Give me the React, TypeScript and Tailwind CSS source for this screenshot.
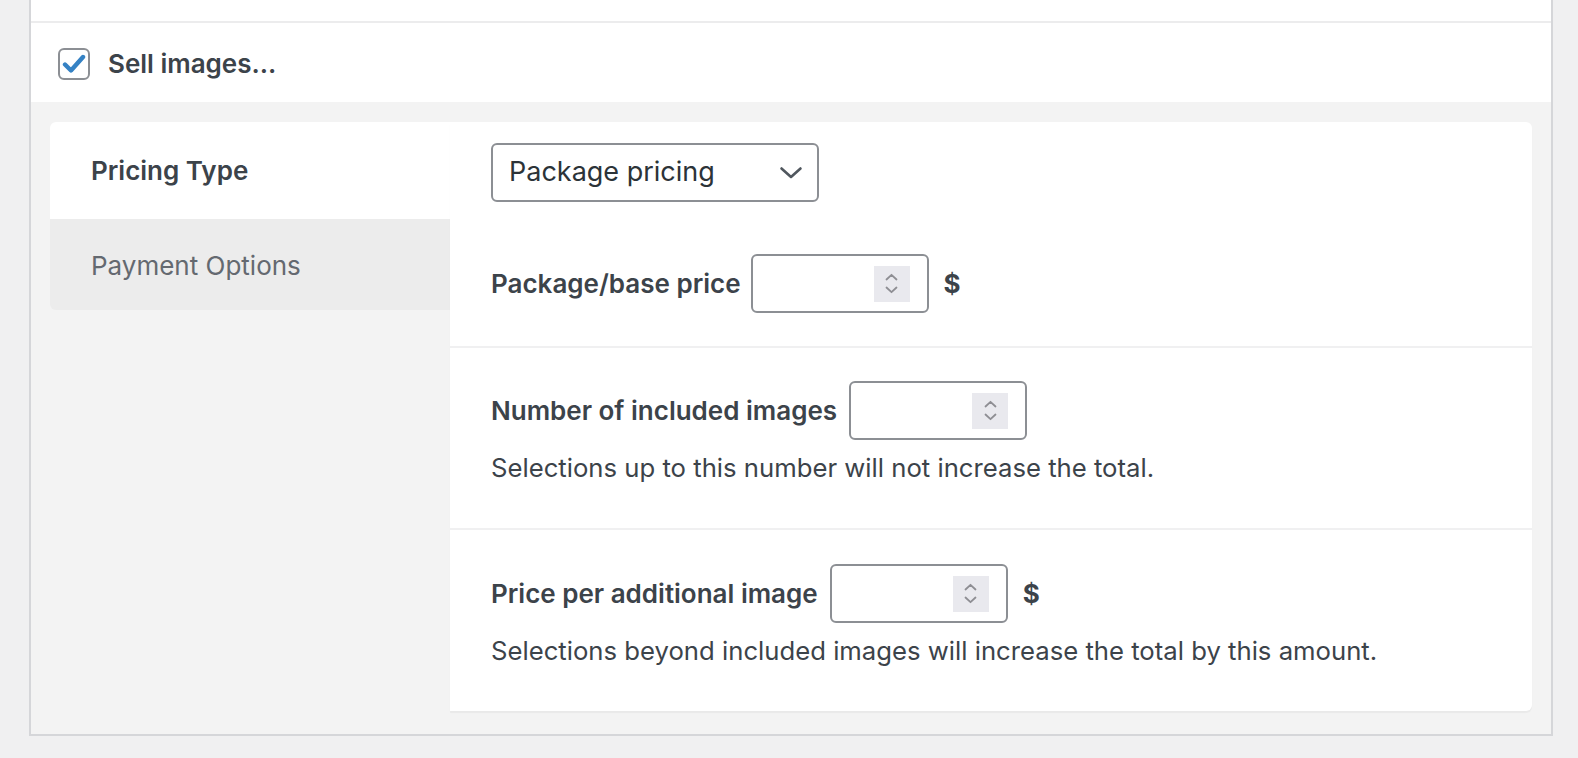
import React from "react";

const font = { fontFamily: "Inter, 'Noto Sans', sans-serif" };

function Spinner() {
  return (
    <div className="absolute right-[17px] top-1/2 -translate-y-1/2 w-[36px] h-[36px] bg-[#e9e9ee] flex flex-col items-center justify-center gap-[5px]">
      <svg width="13" height="8" viewBox="0 0 13 8" fill="none">
        <path d="M1.5 6.5 L6.5 1.8 L11.5 6.5" stroke="#8e8e93" strokeWidth="1.8" strokeLinecap="round" strokeLinejoin="round" />
      </svg>
      <svg width="13" height="8" viewBox="0 0 13 8" fill="none">
        <path d="M1.5 1.5 L6.5 6.2 L11.5 1.5" stroke="#8e8e93" strokeWidth="1.8" strokeLinecap="round" strokeLinejoin="round" />
      </svg>
    </div>
  );
}

function NumInput() {
  return (
    <div className="relative w-[178px] h-[59px] border-2 border-[#8c8f94] rounded-[6px] bg-white">
      <Spinner />
    </div>
  );
}

export default function App() {
  return (
    <div className="w-full h-[758px] bg-[#f0f0f1] overflow-hidden" style={font}>
      <div className="ml-[29px] w-[1524px] border-x-2 border-b-2 border-[#d5d6d9] bg-white">
        <div className="h-[23px] bg-white border-b-2 border-[#ececed]" />
        <div className="h-[79px] bg-white flex items-center pl-[27px] pt-[3px]">
          <div className="w-[32px] h-[32px] border-2 border-[#8c8f94] rounded-[6px] bg-white flex items-center justify-center">
            <svg width="24" height="20" viewBox="0 0 24 20" fill="none">
              <path d="M3 10.5 L9 16.5 L21 3" stroke="#3582c4" strokeWidth="4.4" strokeLinecap="round" strokeLinejoin="round" />
            </svg>
          </div>
          <span className="ml-[18px] text-[26px] font-semibold text-[#3c434a] leading-none">Sell images...</span>
        </div>
        <div className="bg-[#f3f3f3] px-[19px] pt-[20px] pb-[23px]">
          <div className="flex">
            <div className="w-[400px] shrink-0">
              <div className="h-[97px] bg-white rounded-tl-[6px] flex items-center pl-[41px]">
                <span className="text-[26px] font-semibold text-[#3c434a]">Pricing Type</span>
              </div>
              <div className="h-[91px] bg-[#ececec] rounded-bl-[6px] flex items-center pl-[41px] pt-[2px]">
                <span className="text-[26px] text-[#646970]">Payment Options</span>
              </div>
            </div>
            <div className="flex-1 bg-white rounded-r-[6px] shadow-[0_2px_1px_rgba(0,0,0,0.04)]">
              <div className="h-[226px] border-b-2 border-[#f0f0f1] pl-[41px] pt-[21px]">
                <div className="w-[328px] h-[59px] border-2 border-[#8c8f94] rounded-[6px] flex items-center justify-between pl-[16px] pr-[14px]">
                  <span className="text-[27px] text-[#2c3338]">Package pricing</span>
                  <svg width="24" height="14" viewBox="0 0 24 14" fill="none">
                    <path d="M2.5 2.5 L12 11 L21.5 2.5" stroke="#50575e" strokeWidth="2.6" strokeLinecap="round" strokeLinejoin="round" />
                  </svg>
                </div>
                <div className="mt-[52px] flex items-center">
                  <span className="text-[26px] font-semibold text-[#3c434a] mr-[10px]">Package/base price</span>
                  <NumInput />
                  <span className="ml-[15px] text-[26px] font-bold text-[#3c434a]">$</span>
                </div>
              </div>
              <div className="h-[182px] border-b-2 border-[#f0f0f1] pl-[41px] pt-[33px]">
                <div className="flex items-center">
                  <span className="text-[26px] font-semibold text-[#3c434a] mr-[12px]">Number of included images</span>
                  <NumInput />
                </div>
                <div className="mt-[12px] text-[25.7px] leading-[32px] text-[#3c434a]">
                  Selections up to this number will not increase the total.
                </div>
              </div>
              <div className="h-[181px] pl-[41px] pt-[34px]">
                <div className="flex items-center">
                  <span className="text-[26px] font-semibold text-[#3c434a] mr-[12px]">Price per additional image</span>
                  <NumInput />
                  <span className="ml-[15px] text-[26px] font-bold text-[#3c434a]">$</span>
                </div>
                <div className="mt-[12px] text-[25.7px] leading-[32px] text-[#3c434a]">
                  Selections beyond included images will increase the total by this amount.
                </div>
              </div>
            </div>
          </div>
        </div>
      </div>
    </div>
  );
}
